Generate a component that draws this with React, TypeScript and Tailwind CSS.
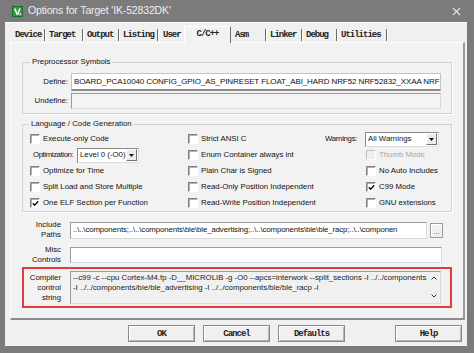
import React from "react";

const sans = "font-['Liberation_Sans',Arial,sans-serif]";
const mono = "font-['Liberation_Mono','DejaVu_Sans_Mono',monospace]";

function Check({ checked, disabled }: { checked?: boolean; disabled?: boolean }) {
  return (
    <span
      className={
        disabled
          ? "w-[10px] h-[10px] shrink-0 border border-t-[#c0c0c0] border-l-[#c0c0c0] border-b-[#ffffff] border-r-[#ffffff] bg-[#f0f0f0] flex items-center justify-center"
          : "w-[10px] h-[10px] shrink-0 border border-t-[#808080] border-l-[#808080] border-b-[#ffffff] border-r-[#ffffff] shadow-[inset_1px_1px_0_#b0b0b0] bg-white flex items-center justify-center"
      }
    >
      {checked && (
        <svg width="7" height="7" viewBox="0 0 7 7">
          <path d="M0.8 3.3 L2.6 5.3 L6.2 1.2" fill="none" stroke="#111" strokeWidth="1.4" />
        </svg>
      )}
    </span>
  );
}

function CheckRow({ label, checked, disabled }: { label: string; checked?: boolean; disabled?: boolean }) {
  return (
    <div className="h-[16px] flex items-center gap-[3px]">
      <Check checked={checked} disabled={disabled} />
      <span className={disabled ? "text-[#a8a8a8] whitespace-nowrap" : "text-[#111] whitespace-nowrap"}>{label}</span>
    </div>
  );
}

function DropArrow() {
  return (
    <span className="w-[11px] h-[12px] shrink-0 bg-[#ececec] border border-t-white border-l-white border-b-[#707070] border-r-[#707070] flex items-center justify-center">
      <svg width="5" height="3" viewBox="0 0 5 3">
        <path d="M0 0 H5 L2.5 3 Z" fill="#111" />
      </svg>
    </span>
  );
}

function Select({ value, width }: { value: string; width: string }) {
  return (
    <div className={`${width} h-[15px] shrink-0 flex items-center bg-white border border-t-[#8a8a8a] border-l-[#8a8a8a] border-b-[#dcdcdc] border-r-[#dcdcdc] pr-[1px]`}>
      <span className="flex-1 min-w-0 pl-[2px] whitespace-nowrap overflow-hidden text-[#111]">{value}</span>
      <DropArrow />
    </div>
  );
}

function TabItem({ label, w, active }: { label: string; w: string; active?: boolean }) {
  if (active) {
    return (
      <div className={`${w} h-[17px] bg-[#f2f2f2] border-t border-l border-t-white border-l-white border-r border-r-[#707070] -mb-[1px] flex items-center justify-center pb-[3px] z-10`}>
        <span>{label}</span>
      </div>
    );
  }
  return (
    <div className={`${w} h-[14px] flex items-center pl-[4px]`}>
      <span className="flex-1 whitespace-nowrap">{label}</span>
      <span className="w-[1px] h-[12px] bg-[#6a6a6a] shadow-[1px_0_0_#ffffff]" />
    </div>
  );
}

function Btn({ label }: { label: string }) {
  return (
    <div className="w-[67px] h-[17px] flex items-center justify-center bg-[#f0f0f0] border border-[#8a8a8a] shadow-[inset_1px_1px_0_#ffffff,inset_-1px_-1px_0_#b4b4b4]">
      {label}
    </div>
  );
}

function SideLabel({ lines, w }: { lines: string[]; w: string }) {
  return (
    <div className={`${w} shrink-0 flex flex-col items-end leading-[10px] text-[#111]`}>
      {lines.map((l) => (
        <span key={l}>{l}</span>
      ))}
    </div>
  );
}

export default function App() {
  return (
    <div className={`w-[474px] h-[353px] bg-[#7b7b7b] flex flex-col overflow-hidden ${sans}`}>
      {/* title bar */}
      <div className="h-[22px] shrink-0 flex items-center pl-[12px] pr-[13px]">
        <svg width="11" height="11" viewBox="0 0 11 11">
          <rect x="0" y="0" width="11" height="11" fill="#2f9a45" />
          <rect x="0.5" y="0.5" width="10" height="10" fill="none" stroke="#1d6b2c" strokeWidth="1" />
          <path d="M2 2.5 L4.4 8.8 H6.3 L8.8 2.5 H7.1 L5.4 7.2 L3.7 2.5 Z" fill="#ffffff" />
          <rect x="7.6" y="7.4" width="1.6" height="1.6" fill="#ffffff" />
        </svg>
        <span className="ml-[5px] text-[10.5px] tracking-[-0.15px] text-[#eeeeee] whitespace-nowrap">
          Options for Target 'IK-52832DK'
        </span>
        <div className="flex-1" />
        <svg width="9" height="9" viewBox="0 0 9 9">
          <path d="M1 1 L8 8 M8 1 L1 8" stroke="#e4e4e4" strokeWidth="1.1" />
        </svg>
      </div>

      {/* dialog body */}
      <div className="ml-[5px] mr-[7px] h-[324px] bg-[#f0f0f0] flex flex-col text-[7.8px] leading-[10px] border-t border-t-white">
        {/* tabs */}
        <div className={`h-[19px] shrink-0 pl-[6px] flex items-end text-[9px] font-bold tracking-[-1px] text-[#222] ${mono}`}>
          <TabItem label="Device" w="w-[34px]" />
          <TabItem label="Target" w="w-[38px]" />
          <TabItem label="Output" w="w-[36px]" />
          <TabItem label="Listing" w="w-[39px]" />
          <div className="w-[26px] h-[14px] flex items-center pl-[5px]">User</div>
          <TabItem label="C/C++" w="w-[47px]" active />
          <TabItem label="Asm" w="w-[35px]" />
          <TabItem label="Linker" w="w-[36px]" />
          <TabItem label="Debug" w="w-[35px]" />
          <TabItem label="Utilities" w="w-[50px]" />
        </div>

        {/* tab page */}
        <div className="ml-[5px] mr-[2px] h-[278px] min-w-0 shrink-0 bg-[#f2f2f2] border-t border-l border-t-white border-l-white border-r-2 border-b-2 border-r-[#9a9a9a] border-b-[#8c8c8c] flex flex-col">
          {/* Preprocessor Symbols */}
          <fieldset className="min-w-0 mt-[14px] ml-[11px] mr-[11px] border border-[#d2d2d2] shadow-[1px_1px_0_#ffffff] pl-[1px] pr-[10px] pb-[4px]">
            <legend className="ml-[6px] px-[2px] text-[#111]">Preprocessor Symbols</legend>
            <div className="pt-[6px] flex flex-col gap-[2px]">
              <div className="flex items-center">
                <div className="w-[44px] shrink-0 text-right text-[#111]">Define:</div>
                <div className="ml-[3px] flex-1 min-w-0 h-[18px] bg-white border border-t-[#c4c4c4] border-l-[#c4c4c4] border-r-[#c4c4c4] border-b-2 border-b-[#8a8a8a] flex items-center pl-[2px] overflow-hidden">
                  <span className="whitespace-nowrap text-[8px] tracking-[-0.1px] text-[#111]">
                    BOARD_PCA10040 CONFIG_GPIO_AS_PINRESET FLOAT_ABI_HARD NRF52 NRF52832_XXAA NRF
                  </span>
                </div>
              </div>
              <div className="flex items-center">
                <div className="w-[44px] shrink-0 text-right text-[#111]">Undefine:</div>
                <div className="ml-[3px] flex-1 min-w-0 h-[16px] bg-[#f4f4f4] border border-t-[#9a9a9a] border-l-[#9a9a9a] border-r-[#dadada] border-b-[#dadada]" />
              </div>
            </div>
          </fieldset>

          {/* Language / Code Generation */}
          <fieldset className="min-w-0 mt-[5px] ml-[11px] mr-[11px] border border-[#d2d2d2] shadow-[1px_1px_0_#ffffff] pb-[0px]">
            <legend className="ml-[6px] px-[2px] text-[#111]">Language / Code Generation</legend>
            <div className="pt-[2px] flex">
              <div className="w-[165px] shrink-0 pl-[7px] flex flex-col">
                <CheckRow label="Execute-only Code" />
                <div className="h-[16px] flex items-center">
                  <span className="pl-[3px] w-[47px] shrink-0 tracking-[-0.4px] whitespace-nowrap text-[#111]">Optimization:</span>
                  <Select value="Level 0 (-O0)" width="w-[62px]" />
                </div>
                <CheckRow label="Optimize for Time" />
                <CheckRow label="Split Load and Store Multiple" />
                <CheckRow label="One ELF Section per Function" checked />
              </div>
              <div className="w-[137px] shrink-0 flex flex-col">
                <CheckRow label="Strict ANSI C" />
                <CheckRow label="Enum Container always int" />
                <CheckRow label="Plain Char is Signed" />
                <CheckRow label="Read-Only Position Independent" />
                <CheckRow label="Read-Write Position Independent" />
              </div>
              <div className="flex-1 min-w-0 flex flex-col">
                <div className="h-[16px] flex items-center">
                  <span className="w-[40px] shrink-0 tracking-[-0.3px] text-[#111]">Warnings:</span>
                  <Select value="All Warnings" width="w-[74px]" />
                </div>
                <div className="pl-[41px] flex flex-col">
                  <CheckRow label="Thumb Mode" disabled />
                  <CheckRow label="No Auto Includes" />
                  <CheckRow label="C99 Mode" checked />
                  <CheckRow label="GNU extensions" />
                </div>
              </div>
            </div>
          </fieldset>

          {/* Include Paths */}
          <div className="mt-[8px] ml-[11px] mr-[11px] flex items-center">
            <SideLabel lines={["Include", "Paths"]} w="w-[39px]" />
            <div className="ml-[9px] w-[357px] h-[17px] bg-white border border-t-[#9a9a9a] border-l-[#9a9a9a] border-r-[#dadada] border-b-[#dadada] flex items-center pl-[2px] overflow-hidden">
              <span className="whitespace-nowrap tracking-[-0.1px] text-[#111]">
                ..\..\components;..\..\components\ble\ble_advertising;..\..\components\ble\ble_racp;..\..\componen
              </span>
            </div>
            <div className="ml-[3px] w-[13px] h-[15px] bg-[#f0f0f0] border border-[#9a9a9a] shadow-[inset_1px_1px_0_#ffffff] flex items-end justify-center pb-[2px] text-[#333] leading-[6px]">
              ...
            </div>
          </div>

          {/* Misc Controls */}
          <div className="mt-[5px] ml-[11px] mr-[11px] flex items-center">
            <SideLabel lines={["Misc", "Controls"]} w="w-[39px]" />
            <div className="ml-[9px] w-[372px] h-[16px] bg-white border border-t-[#9a9a9a] border-l-[#9a9a9a] border-r-[#dadada] border-b-[#dadada]" />
          </div>

          {/* Compiler control string (highlighted) */}
          <div className="mt-[2px] ml-[11px] mr-[11px] h-[41px] border-2 border-[#e23b3f] flex items-center">
            <SideLabel lines={["Compiler", "control", "string"]} w="w-[37px]" />
            <div className="ml-[9px] w-[371px] h-[33px] bg-[#f0f0f0] border border-t-[#9a9a9a] border-l-[#9a9a9a] border-r-[#dadada] border-b-[#dadada] flex">
              <div className="flex-1 min-w-0 pl-[2px] pt-[1px] flex flex-col overflow-hidden text-[#222] whitespace-nowrap">
                <span>--c99 -c --cpu Cortex-M4.fp -D__MICROLIB -g -O0 --apcs=interwork --split_sections -I ../../components</span>
                <span>-I ../../components/ble/ble_advertising -I ../../components/ble/ble_racp -I</span>
              </div>
              <div className="w-[12px] shrink-0 flex flex-col items-center justify-between pt-[4px] pb-[5px]">
                <svg width="6" height="4" viewBox="0 0 6 4">
                  <path d="M0.5 3.5 L3 1 L5.5 3.5" fill="none" stroke="#333" strokeWidth="1" />
                </svg>
                <svg width="6" height="4" viewBox="0 0 6 4">
                  <path d="M0.5 0.5 L3 3 L5.5 0.5" fill="none" stroke="#333" strokeWidth="1" />
                </svg>
              </div>
            </div>
          </div>
        </div>

        {/* buttons */}
        <div className={`mt-[5px] pl-[123px] flex text-[9px] font-bold tracking-[-1px] text-[#222] ${mono}`}>
          <Btn label="OK" />
          <div className="w-[8px]" />
          <Btn label="Cancel" />
          <div className="w-[8px]" />
          <Btn label="Defaults" />
          <div className="w-[50px]" />
          <Btn label="Help" />
        </div>
      </div>
    </div>
  );
}
